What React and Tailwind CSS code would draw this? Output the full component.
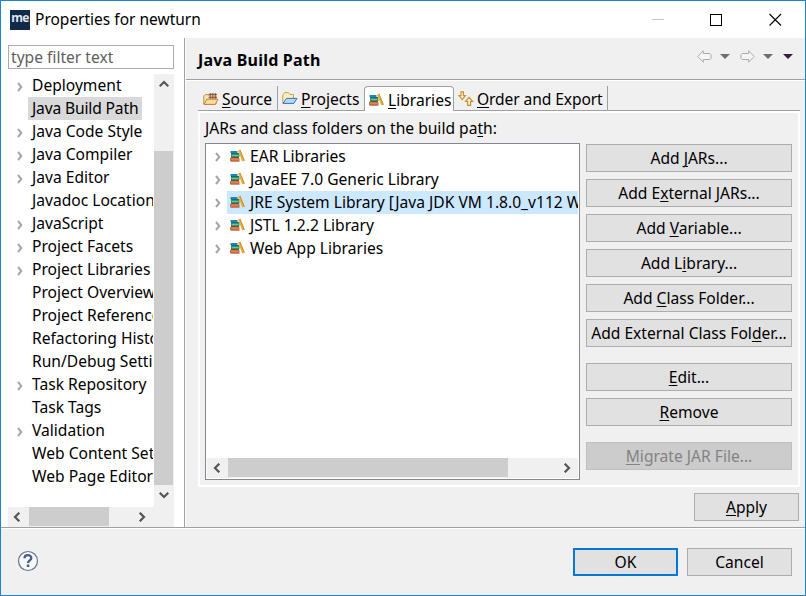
import React from 'react';
import clsx from 'clsx';

const treeItems = [
  { label: 'Deployment', expandable: true },
  { label: 'Java Build Path', selected: true },
  { label: 'Java Code Style', expandable: true },
  { label: 'Java Compiler', expandable: true },
  { label: 'Java Editor', expandable: true },
  { label: 'Javadoc Location' },
  { label: 'JavaScript', expandable: true },
  { label: 'Project Facets', expandable: true },
  { label: 'Project Libraries', expandable: true },
  { label: 'Project Overview' },
  { label: 'Project References' },
  { label: 'Refactoring History' },
  { label: 'Run/Debug Settings' },
  { label: 'Task Repository', expandable: true },
  { label: 'Task Tags' },
  { label: 'Validation', expandable: true },
  { label: 'Web Content Settings' },
  { label: 'Web Page Editor' },
];

const libraries = [
  { label: 'EAR Libraries' },
  { label: 'JavaEE 7.0 Generic Library' },
  {
    label: 'JRE System Library [Java JDK VM 1.8.0_v112 Windows]',
    selected: true,
  },
  { label: 'JSTL 1.2.2 Library' },
  { label: 'Web App Libraries' },
];

// "&" marks the mnemonic letter
const Mnemonic = ({ text }) => {
  const i = text.indexOf('&');
  if (i < 0) return <span>{text}</span>;
  return (
    <span>
      {text.slice(0, i)}
      <span className="underline decoration-1 underline-offset-2">
        {text[i + 1]}
      </span>
      {text.slice(i + 2)}
    </span>
  );
};

const Expander = () => (
  <svg width="6" height="10" viewBox="0 0 6 10" fill="none">
    <path d="M1 1 L4.3 5 L1 9" stroke="#a6a6a6" strokeWidth="2" />
  </svg>
);

const ScrollArrow = ({ className = '' }) => (
  <svg
    width="10"
    height="10"
    viewBox="0 0 10 10"
    fill="none"
    className={className}
  >
    <path d="M7.3 0.7 L3 5 L7.3 9.3" stroke="#555" strokeWidth="2.2" />
  </svg>
);

const BooksIcon = ({ className = '' }) => (
  <svg
    width="16"
    height="16"
    viewBox="0 0 16 16"
    className={clsx('shrink-0', className)}
  >
    <rect x="0.5" y="3" width="7" height="2" fill="#1c86bd" />
    <rect x="1" y="5" width="8" height="1" fill="#1d6a6c" />
    <rect x="1" y="6" width="8.5" height="3" fill="#2a9a72" />
    <rect x="2" y="7" width="6.5" height="1" fill="#73bf98" />
    <rect x="1" y="9" width="8" height="1" fill="#7d4a2c" />
    <rect x="0" y="10" width="9.5" height="3" fill="#c96d3e" />
    <rect x="1" y="10.6" width="7.5" height="1" fill="#de9060" />
    <rect x="0.5" y="13" width="9" height="0.6" fill="#9c4a26" />
    <path d="M8 2.4 L10.3 1.8 L14.7 12.6 L12.2 13.4 Z" fill="#efb03c" />
    <path d="M10.3 1.8 L14.7 12.6 L13.8 12.9 L9.5 2 Z" fill="#cf8a2d" />
  </svg>
);

const SourceIcon = () => (
  <svg width="16" height="16" viewBox="0 0 16 16" className="shrink-0">
    <path
      d="M0.8 13 V5 L2.2 3.6 H5 L6.2 5 H13 V13 Z"
      fill="#f7e6b4"
      stroke="#c08c46"
    />
    <rect x="6" y="2" width="7.5" height="6" fill="#ecd0ad" />
    <path
      d="M5.5 3.6 H14 M5.5 6.3 H14 M7.3 2 V8 M9.8 2 V8 M12.3 2 V8"
      stroke="#7d4c3a"
      strokeWidth="0.9"
    />
    <path
      d="M1 13.4 L3.8 8.2 H15 L12.3 13.4 Z"
      fill="#f9dc98"
      stroke="#bd8136"
    />
  </svg>
);

const ProjectsIcon = () => (
  <svg width="16" height="16" viewBox="0 0 16 16" className="shrink-0">
    <path
      d="M0.8 12 V4 L2.8 1.6 H6.5 L8 3.5 H11.5 V12 Z"
      fill="#faeebf"
      stroke="#c7a04c"
    />
    <path
      d="M1 12.4 L4.5 7.4 H15 L11.8 12.4 Z"
      fill="#b5d6f6"
      stroke="#3d6fb8"
    />
  </svg>
);

const OrderIcon = () => (
  <svg
    width="16"
    height="16"
    viewBox="0 0 16 16"
    fill="#fdf6dc"
    stroke="#c8922e"
    strokeWidth="1.2"
    className="shrink-0"
  >
    <path d="M3 0.8 H5.4 V4.6 H7.4 L4.2 8.6 L1 4.6 H3 Z" />
    <path d="M9.6 14.4 H12.6 V10.4 H14.6 L11.1 6.4 L7.6 10.4 H9.6 Z" />
  </svg>
);

const HistoryArrow = ({ className = '' }) => (
  <svg
    width="15"
    height="13"
    viewBox="0 0 15 13"
    fill="#f5f5f5"
    stroke="#ababab"
    className={className}
  >
    <path d="M0.8 6.5 L6.3 0.8 V3.5 H13 L14 4.5 V8.5 L13 9.5 H6.3 V12.2 Z" />
  </svg>
);

const DropArrow = ({ color = '#6e6e6e', className = '' }) => (
  <svg width="10" height="5" viewBox="0 0 10 5" className={className}>
    <path d="M0 0 H10 L5 5 Z" fill={color} />
  </svg>
);

const Button = ({ text, className = '', disabled, primary }) => (
  <button
    className={clsx(
      'flex h-7 items-center justify-center whitespace-nowrap',
      primary ? 'border-2 border-[#0078d7]' : 'border',
      disabled
        ? 'border-[#bfbfbf] bg-[#cccccc] text-[#838383]'
        : 'bg-[#e1e1e1]',
      !disabled && !primary && 'border-[#adadad]',
      className
    )}
  >
    <Mnemonic text={text} />
  </button>
);

const TitleBar = () => (
  <div className="flex h-[37px] shrink-0 items-center bg-white pl-[9px]">
    <div className="flex h-5 w-5 items-center justify-center overflow-hidden bg-[#122a4a] pb-[3px] text-[12px] font-bold tracking-[-0.8px] text-[#dfe5ee]">
      me
    </div>
    <span className="ml-[5px] flex-1 pb-px text-[15.5px]">
      Properties for newturn
    </span>
    <svg
      width="130"
      height="14"
      viewBox="0 0 130 14"
      fill="none"
      className="mr-[23px]"
    >
      <path d="M0 6.5 H12" stroke="#c6c6c6" />
      <rect x="58.5" y="1.5" width="11" height="11" stroke="#000" />
      <path
        d="M117.5 1 L129 12.5 M129 1 L117.5 12.5"
        stroke="#000"
        strokeWidth="1.1"
      />
    </svg>
  </div>
);

const Sidebar = () => (
  <div className="flex w-[183px] shrink-0 flex-col bg-white pl-[7px] pt-[7px]">
    <div className="flex h-6 w-[166px] items-center border border-[#ababab] pl-[2px] text-[#606060]">
      type filter text
    </div>
    <div className="mt-[5px] flex h-[433px] w-[166px]">
      <div className="w-[145px] overflow-hidden">
        {treeItems.map((item) => (
          <div key={item.label} className="flex h-[23px] items-center">
            <div className="flex w-5 shrink-0 justify-center pl-[4px] pt-[3px]">
              {item.expandable && <Expander />}
            </div>
            <div
              className={clsx(
                'h-[23px] whitespace-nowrap px-1 leading-[23px]',
                item.selected && 'w-[114px] shrink-0 bg-[#d9d9d9] tracking-[-0.15px]'
              )}
            >
              {item.label}
            </div>
          </div>
        ))}
      </div>
      <div className="ml-px flex w-5 flex-col items-center bg-[#f0f0f0]">
        <div className="flex h-[77px] items-start pt-[5px]">
          <ScrollArrow className="rotate-90" />
        </div>
        <div className="mr-px h-[334px] w-[19px] bg-[#cdcdcd]" />
        <ScrollArrow className="mt-[5px] -rotate-90" />
      </div>
    </div>
    <div className="flex h-5 w-[166px] items-start bg-[#f0f0f0]">
      <div className="flex h-[19px] w-[21px] items-center pl-[4px]">
        <ScrollArrow />
      </div>
      <div className="h-[19px] w-20 bg-[#cdcdcd]" />
      <div className="flex h-[19px] items-center pl-[28px]">
        <ScrollArrow className="rotate-180" />
      </div>
    </div>
  </div>
);

const Tab = ({ icon, text, active, className }) => (
  <div
    className={clsx(
      'flex shrink-0 items-center whitespace-nowrap border-[#a0a0a0] pt-[2px]',
      active
        ? 'rounded-t-[4px] border-l border-r border-t bg-white'
        : 'border-b',
      className
    )}
  >
    {icon}
    <Mnemonic text={text} />
  </div>
);

const LibraryList = () => (
  <div className="flex h-[337px] w-[375px] flex-col border border-[#828790] bg-white p-px">
    <div className="flex-1 overflow-hidden">
      {libraries.map((lib) => (
        <div key={lib.label} className="flex h-[23px]">
          <div className="flex w-5 shrink-0 items-center justify-center pl-[2px] pt-px">
            <Expander />
          </div>
          <div
            className={clsx(
              'flex flex-1 items-center gap-[4px] overflow-hidden whitespace-nowrap pb-[2px] pl-[3px]',
              lib.selected && 'bg-[#cce8ff]'
            )}
          >
            <BooksIcon />
            {lib.label}
          </div>
        </div>
      ))}
    </div>
    <div className="flex h-[20px] items-start bg-[#f0f0f0]">
      <div className="flex h-[19px] w-[21px] items-center pl-[5px]">
        <ScrollArrow />
      </div>
      <div className="h-[19px] w-[280px] bg-[#cdcdcd]" />
      <div className="flex h-[19px] flex-1 items-center justify-end pr-[6px]">
        <ScrollArrow className="rotate-180" />
      </div>
    </div>
  </div>
);

const BuildPathPage = () => (
  <div className="flex flex-1 flex-col border-l border-[#a0a0a0]">
    <div className="flex flex-1 flex-col border-l border-white">
      <div className="flex h-[42px] shrink-0 items-center border-b border-[#a0a0a0] pl-3 pr-3">
        <h1 className="flex-1 pt-[2px] text-[16px] font-bold tracking-[0.2px]">
          Java Build Path
        </h1>
        <div className="flex items-center pb-[5px]">
          <HistoryArrow />
          <DropArrow className="ml-[8px]" />
          <HistoryArrow className="ml-[10px] rotate-180" />
          <DropArrow className="ml-[8px]" />
          <DropArrow className="ml-[10px]" color="#33203f" />
        </div>
      </div>
      <div className="flex flex-1 flex-col border-t border-white pl-3 pr-[5px] pt-[5px]">
        <div className="flex h-[25px]">
          <Tab
            icon={<SourceIcon />}
            text="&Source"
            className="w-[80px] gap-[3px] border-r pl-[5px]"
          />
          <Tab
            icon={<ProjectsIcon />}
            text="&Projects"
            className="w-[86px] gap-[3px] pl-[4px]"
          />
          <Tab
            icon={<BooksIcon />}
            text="&Libraries"
            active
            className="w-[90px] gap-[3px] pl-[4px]"
          />
          <Tab
            icon={<OrderIcon />}
            text="&Order and Export"
            className="w-[154px] gap-[3px] border-r pl-[4px] tracking-[-0.1px]"
          />
          <div className="flex-1 border-b border-[#a0a0a0]" />
        </div>
        <div className="h-[376px] border-2 border-white pl-[5px]">
          <div className="h-[30px] pt-[5px]">
            <Mnemonic text="JARs and class folders on the build pa&th:" />
          </div>
          <div className="flex gap-[6px]">
            <LibraryList />
            <div className="flex w-[206px] flex-col gap-[7px] pt-px">
              <Button text="Add &JARs..." />
              <Button text="Add E&xternal JARs..." />
              <Button text="Add &Variable..." />
              <Button text="Add L&ibrary..." />
              <Button text="Add &Class Folder..." />
              <Button text="Add External Class Fol&der..." />
              <Button text="&Edit..." className="mt-[9px]" />
              <Button text="&Remove" />
              <Button
                text="&Migrate JAR File..."
                disabled
                className="mt-[9px]"
              />
            </div>
          </div>
        </div>
        <div className="flex justify-end pr-px pt-[6px]">
          <Button text="&Apply" className="w-[105px]" />
        </div>
      </div>
    </div>
  </div>
);

const Footer = () => (
  <div className="flex h-[68px] shrink-0 items-start border-t border-[#a0a0a0]">
    <div className="flex h-full flex-1 items-start border-t border-white pl-[16px] pr-[13px] pt-[19px]">
      <svg
        width="22"
        height="22"
        viewBox="0 0 22 22"
        fill="none"
        className="mt-[2px]"
      >
        <circle
          cx="11"
          cy="11"
          r="9.5"
          fill="#f6f8fb"
          stroke="#66758f"
          strokeWidth="1.2"
        />
        <path
          d="M7.5 8.3 C7.5 4 14.3 4.2 14.3 8 C14.3 10.4 11 10.4 11 13"
          stroke="#4b5d82"
          strokeWidth="2.3"
        />
        <rect x="9.8" y="14.5" width="2.5" height="2.5" fill="#4b5d82" />
      </svg>
      <div className="flex flex-1 justify-end gap-[9px]">
        <Button text="OK" primary className="w-[105px]" />
        <Button text="Cancel" className="w-[105px]" />
      </div>
    </div>
  </div>
);

const App = () => (
  <div className="flex h-[596px] w-[806px] flex-col overflow-hidden border border-[#1883d7] bg-[#f0f0f0] font-['Noto_Sans',sans-serif] text-[15.6px] leading-5 text-black">
    <TitleBar />
    <div className="flex min-h-0 flex-1">
      <Sidebar />
      <BuildPathPage />
    </div>
    <Footer />
  </div>
);

export default App;
